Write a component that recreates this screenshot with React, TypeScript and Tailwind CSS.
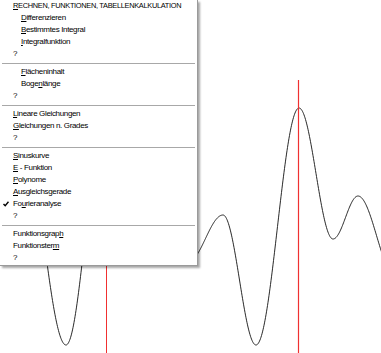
import React from 'react';

type Item = { label: string; u?: number; indent?: boolean; checked?: boolean };

// groups of the popup menu; u = index of the underlined mnemonic letter
const groups: Item[][] = [
  [
    { label: 'Differenzieren', u: 0, indent: true },
    { label: 'Bestimmtes Integral', u: 0, indent: true },
    { label: 'Integralfunktion', u: 0, indent: true },
    { label: '?' },
  ],
  [
    { label: 'Flächeninhalt', u: 0, indent: true },
    { label: 'Bogenlänge', u: 4, indent: true },
    { label: '?' },
  ],
  [
    { label: 'Lineare Gleichungen', u: 0 },
    { label: 'Gleichungen n. Grades', u: 0 },
    { label: '?' },
  ],
  [
    { label: 'Sinuskurve', u: 0 },
    { label: 'E - Funktion', u: 0 },
    { label: 'Polynome', u: 0 },
    { label: 'Ausgleichsgerade', u: 0 },
    { label: 'Fourieranalyse', u: 2, checked: true },
    { label: '?' },
  ],
  [
    { label: 'Funktionsgraph', u: 13 },
    { label: 'Funktionsterm', u: 12 },
    { label: '?' },
  ],
];

// extrema of the plotted curve, joined by half cosine waves
const extrema: [number, number][] = [
  [-20, 110],
  [20, 120],
  [66, 345],
  [105, 120],
  [188, 262],
  [223, 215],
  [256, 345],
  [299, 108],
  [333, 239],
  [358, 196],
  [395, 275],
];

function curvePath() {
  const pts: string[] = [];
  for (let i = 0; i < extrema.length - 1; i++) {
    const [ax, ay] = extrema[i];
    const [bx, by] = extrema[i + 1];
    for (let x = ax; x < bx; x += 0.5) {
      const t = (x - ax) / (bx - ax);
      const y = ay + (by - ay) * (1 - Math.cos(Math.PI * t)) / 2;
      pts.push(`${x.toFixed(1)},${y.toFixed(2)}`);
    }
  }
  return 'M' + pts.join(' L');
}

const Label: React.FC<{ item: Item }> = ({ item }) => {
  const { label, u } = item;
  if (u === undefined) return <span>{label}</span>;
  return (
    <span>
      {label.slice(0, u)}
      <span className="underline underline-offset-1">{label[u]}</span>
      {label.slice(u + 1)}
    </span>
  );
};

const Check = () => (
  <svg width="6" height="6" viewBox="0 0 6 6" className="absolute left-[3px] top-[3px]">
    <path d="M0.5 3 L2.2 4.8 L5.5 0.8" stroke="#000" strokeWidth="1.4" fill="none" />
  </svg>
);

export default function App() {
  return (
    <div className="relative h-[353px] w-[381px] overflow-hidden bg-white" style={{ fontFamily: '"Liberation Sans", Arial, sans-serif' }}>
      <svg width="381" height="353" className="block">
        <path d={curvePath()} stroke="#111" strokeWidth="0.9" fill="none" />
        <line x1="106.5" y1="0" x2="106.5" y2="353" stroke="#f03030" strokeWidth="1" />
        <line x1="298.5" y1="80" x2="298.5" y2="353" stroke="#f03030" strokeWidth="1.2" />
      </svg>

      <div className="absolute left-0 top-0 w-[198px] border-r border-b border-[#9a9a9a] bg-white pb-px text-[8px] leading-[12px] text-black shadow-[2px_2px_2px_rgba(0,0,0,0.35)]">
        <div className="h-[12px] whitespace-nowrap pl-[13px] text-[7.4px] tracking-[-0.3px]">
          <span className="underline underline-offset-1">R</span>ECHNEN, FUNKTIONEN, TABELLENKALKULATION
        </div>
        {groups.map((g, gi) => (
          <div key={gi}>
            {gi > 0 && (
              <div className="flex h-[6px] items-center px-[2px]">
                <div className="h-px w-full bg-[#a8a8a8]" />
              </div>
            )}
            {g.map((item, ii) => (
              <div
                key={ii}
                className={item.indent ? 'relative h-[12px] whitespace-nowrap pl-[21px] tracking-[-0.35px]' : 'relative h-[12px] whitespace-nowrap pl-[13px] tracking-[-0.35px]'}
              >
                {item.checked && <Check />}
                <Label item={item} />
              </div>
            ))}
          </div>
        ))}
      </div>
    </div>
  );
}
